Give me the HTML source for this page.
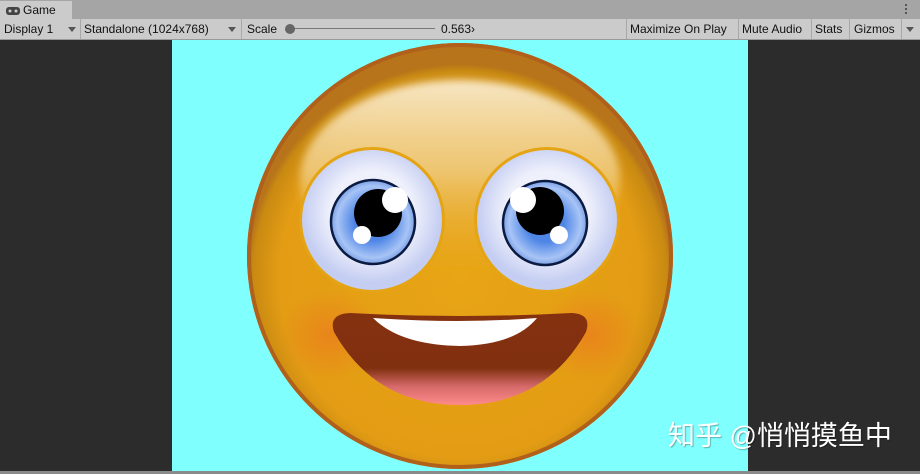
<!DOCTYPE html>
<html><head><meta charset="utf-8"><style>
html,body{margin:0;padding:0;width:920px;height:474px;overflow:hidden;background:#2c2c2c;font-family:"Liberation Sans","DejaVu Sans",sans-serif;}
.tabbar{position:absolute;left:0;top:0;width:920px;height:19px;background:#a5a5a5;}
.tab{position:absolute;left:0;top:1px;width:72px;height:18px;background:#cbcbcb;font-size:12px;line-height:19px;color:#111;}
.toolbar{position:absolute;left:0;top:19px;width:920px;height:20px;background:#cbcbcb;border-bottom:1px solid #999;font-size:12px;color:#111;}
.t{position:absolute;top:0;line-height:21px;white-space:nowrap;}
.sep{position:absolute;top:0;width:1px;height:20px;background:#a8a8a8;}
.arr{position:absolute;top:8px;width:0;height:0;border-left:4px solid transparent;border-right:4px solid transparent;border-top:5px solid #555;}
.view{position:absolute;left:172px;top:40px;width:576px;height:434px;background:#80ffff;}
.bottom{position:absolute;left:0;top:471px;width:920px;height:3px;background:#8a8a8a;}
.wm{position:absolute;left:668px;top:414px;font-family:"Liberation Sans","Noto Sans CJK SC",sans-serif;font-size:27px;color:#fff;white-space:nowrap;text-shadow:1px 1px 1px rgba(0,0,0,.3);}
</style></head><body>
<div class="tabbar"><div class="tab"><svg style="position:absolute;left:6px;top:6px" width="14" height="8"><rect x="0" y="0" width="14" height="8" rx="3" fill="#444"/><circle cx="4" cy="4" r="1.5" fill="#ccc"/><circle cx="10" cy="4" r="1.5" fill="#ccc"/></svg><span style="position:absolute;left:23px;top:0">Game</span></div>
<div style="position:absolute;left:905px;top:4px;width:2px;height:2px;background:#555;box-shadow:0 4px #555,0 8px #555"></div></div>
<div class="toolbar">
<span class="t" style="left:4px">Display 1</span><div class="arr" style="left:68px"></div><div class="sep" style="left:80px"></div>
<span class="t" style="left:84px">Standalone (1024x768)</span><div class="arr" style="left:228px"></div><div class="sep" style="left:241px"></div>
<span class="t" style="left:247px">Scale</span>
<div style="position:absolute;left:290px;top:9px;width:145px;height:1px;background:#777"></div>
<div style="position:absolute;left:285px;top:5px;width:10px;height:10px;border-radius:50%;background:#666"></div>
<span class="t" style="left:441px">0.563›</span>
<div class="sep" style="left:626px"></div><span class="t" style="left:630px">Maximize On Play</span>
<div class="sep" style="left:738px"></div><span class="t" style="left:742px">Mute Audio</span>
<div class="sep" style="left:811px"></div><span class="t" style="left:815px">Stats</span>
<div class="sep" style="left:849px"></div><span class="t" style="left:854px">Gizmos</span>
<div class="sep" style="left:901px"></div><div class="arr" style="left:906px"></div>
</div>
<div class="view"></div>
<svg style="position:absolute;left:0;top:0" width="920" height="474">
<defs>
<radialGradient id="face" cx="50%" cy="55%" r="50%">
<stop offset="0" stop-color="#e8a515"/><stop offset="0.85" stop-color="#e39c14"/><stop offset="0.97" stop-color="#c98a12"/><stop offset="1" stop-color="#b8741a"/>
</radialGradient>
<linearGradient id="hl" x1="0" y1="0" x2="0" y2="1">
<stop offset="0" stop-color="#f7e6c4"/><stop offset="0.45" stop-color="#f0cf88" stop-opacity=".8"/><stop offset="1" stop-color="#e8a515" stop-opacity="0"/>
</linearGradient>
<radialGradient id="white" cx="50%" cy="45%" r="50%">
<stop offset="0.6" stop-color="#eef0fb"/><stop offset="1" stop-color="#c4cdf2"/>
</radialGradient>
<radialGradient id="iris" cx="50%" cy="50%" r="50%">
<stop offset="0.45" stop-color="#4f86e6"/><stop offset="0.85" stop-color="#a8c4f6"/><stop offset="1" stop-color="#7aa0e4"/>
</radialGradient>
<radialGradient id="blush" cx="50%" cy="50%" r="50%"><stop offset="0" stop-color="#ee7020" stop-opacity=".55"/><stop offset="1" stop-color="#ee7020" stop-opacity="0"/></radialGradient>
<linearGradient id="mouth" x1="0" y1="0" x2="0" y2="1">
<stop offset="0" stop-color="#853110"/><stop offset="0.6" stop-color="#80300f"/><stop offset="0.8" stop-color="#d66a6a"/><stop offset="1" stop-color="#ff8a8a"/>
</linearGradient>
<filter id="soft"><feGaussianBlur stdDeviation="4"/></filter>
</defs>
<circle cx="460" cy="256" r="213" fill="url(#face)"/>
<circle cx="460" cy="256" r="211" fill="none" stroke="#b0601a" stroke-width="4"/>
<ellipse cx="330" cy="335" rx="50" ry="45" fill="url(#blush)"/>
<ellipse cx="590" cy="335" rx="50" ry="45" fill="url(#blush)"/>
<ellipse cx="460" cy="180" rx="160" ry="100" fill="url(#hl)" filter="url(#soft)"/>
<circle cx="372" cy="220" r="73" fill="#e5a414"/>
<circle cx="547" cy="220" r="73" fill="#e5a414"/>
<circle cx="372" cy="220" r="70" fill="url(#white)"/>
<circle cx="547" cy="220" r="70" fill="url(#white)"/>
<circle cx="373" cy="222" r="42" fill="url(#iris)" stroke="#0a1a40" stroke-width="2.5"/>
<circle cx="545" cy="223" r="42" fill="url(#iris)" stroke="#0a1a40" stroke-width="2.5"/>
<circle cx="378" cy="213" r="24" fill="#000"/>
<circle cx="540" cy="211" r="24" fill="#000"/>
<circle cx="395" cy="200" r="13" fill="#fff"/>
<circle cx="362" cy="235" r="9" fill="#fff"/>
<circle cx="523" cy="200" r="13" fill="#fff"/>
<circle cx="559" cy="235" r="9" fill="#fff"/>
<path d="M350 313 Q460 319 572 313 Q592 314 586 332 Q545 405 460 405 Q375 405 334 332 Q328 314 350 313Z" fill="url(#mouth)"/>
<path d="M373 318 Q460 324 537 318 Q515 345 460 346 Q400 345 373 318Z" fill="#fff"/>
</svg>
<div class="wm">知乎 @悄悄摸鱼中</div>
<div class="bottom"></div>
</body></html>
